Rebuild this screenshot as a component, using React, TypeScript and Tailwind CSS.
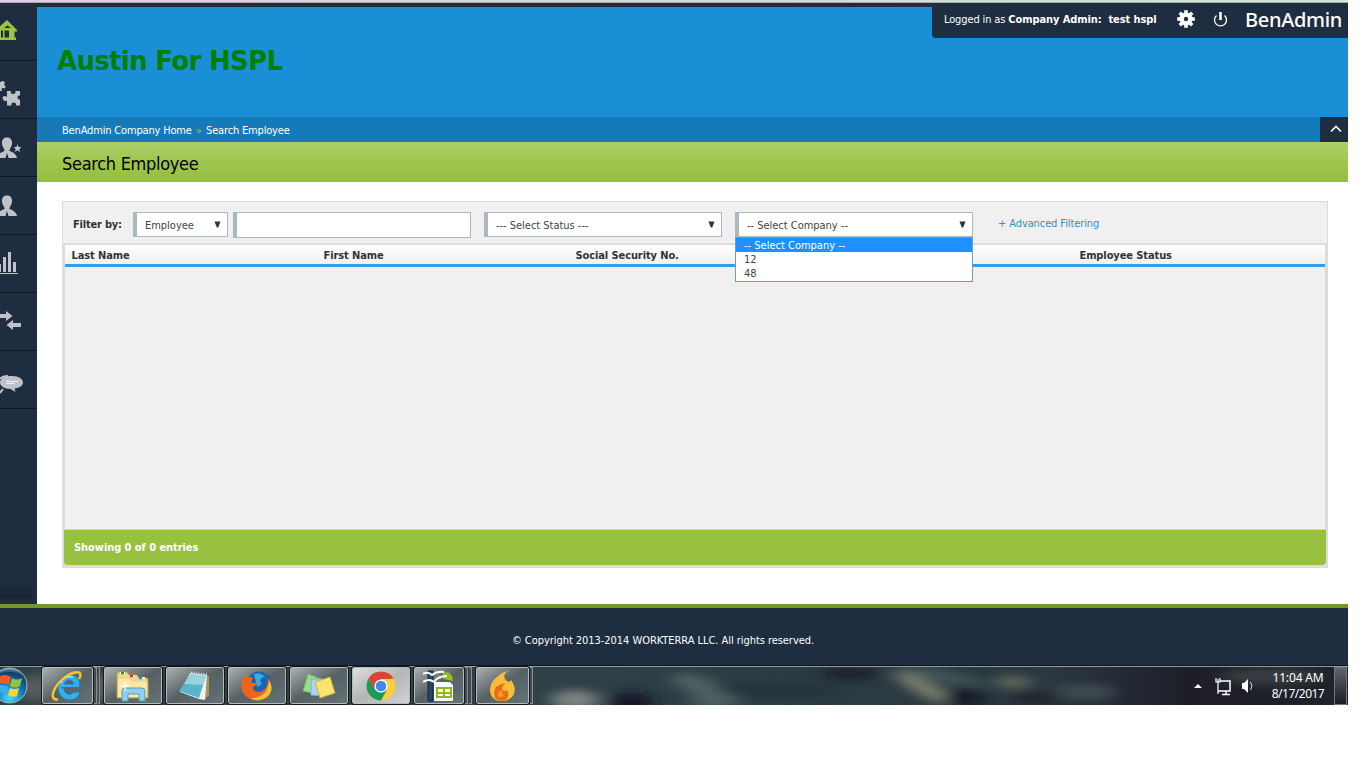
import { ReactNode } from "react";

const sans = "font-['DejaVu_Sans_Condensed','DejaVu_Sans',sans-serif] [font-stretch:condensed]";

const columns = ["Last Name", "First Name", "Social Security No.", "", "Employee Status"];

const HomeIcon = () => (
    <svg width="37" height="57" className="fill-[#9cc545]">
        <path d="M-4 27 L7 17 L17 27 L17 28.5 L14.5 28.5 L14.5 34.500 L16 34.500 L16 37 L-2 37 L-2 28.500 Z" />
        <path d="M4 25 L7.500 22.500 L11 25 Z M1 27.500 H3 V34.500 H1 Z M4.500 27.500 H9 V34.500 H4.500 Z" className="fill-[#1e2d40]" />
    </svg>
);

const PuzzleIcon = () => (
    <svg width="37" height="57" className="fill-[#bfc3c9]">
        <path d="M-2 21 H1 Q2 19 5 21.500 L4 23.500 Q6 25 5 27.500 L3 27 Q1 27 2 30 H-2 Z" />
        <path d="M7 30 H11 Q10 33 13 33 Q16 33 15.500 30 H20 V34.500 Q17.500 34 17.500 36.500 Q17.500 39 20 38.500 V44.500 H16 Q16.500 41.500 13.500 41.500 Q11 41.500 11.500 44.500 H7 V39.500 Q5 41 3 38.500 Q1.500 35 5 35 L7 36 Z" />
    </svg>
);

const UserPath = () => (
    <path d="M7 18.500 C10.500 18.500 12.500 21 12 25 C11.500 28 10 29.500 9.500 31 L9.500 32 Q15.500 33.500 17 39 H8.500 L7 34 L5.500 39 H-3 Q-1.500 33.500 4.500 32 L4.500 31 C4 29.500 2.500 28 2 25 C1.500 21 3.500 18.500 7 18.500 Z" />
);

const UserStarIcon = () => (
    <svg width="37" height="57" className="fill-[#bfc3c9]">
        <UserPath />
        <path d="M17.500 25 L18.500 28 H21.500 L19.300 30 L20.300 33 L17.500 31.300 L14.700 33 L15.700 30 L13.500 28 H16.500 Z" />
    </svg>
);

const UserIcon = () => (
    <svg width="37" height="57" className="fill-[#bfc3c9]">
        <UserPath />
    </svg>
);

const ChartIcon = () => (
    <svg width="37" height="57" className="fill-[#bfc3c9]">
        <path d="M-2 29 H1 V37 H-2 Z M3 22 H6 V37 H3 Z M8 17 H11 V37 H8 Z M13 27 H16 V37 H13 Z M0 38 H18 V39 H0 Z" />
    </svg>
);

const ArrowsIcon = () => (
    <svg width="37" height="57" className="fill-[#bfc3c9]">
        <path d="M0 21 H6 V18 L12.500 23 L6 28 V25 H0 Z M21 30 H13 V27 L6.500 32 L13 37 V34 H21 Z" />
    </svg>
);

const ChatIcon = () => (
    <svg width="37" height="57">
        <path d="M0 28 Q2 25.500 8 25 M0 42 L3 38" stroke="#bfc3c9" strokeWidth="2" fill="none" />
        <path d="M12 25 C19 25 23 28 23 31.500 C23 35 19 37 14.500 37.500 L15.500 41 L10.500 38 C4 38 0 35 0 31.500 C0 27.500 5 25 12 25 Z" fill="#bfc3c9" />
        <path d="M6 30.500 H18 M6 32.500 H15" stroke="#eef0f1" />
    </svg>
);

const menu = [HomeIcon, PuzzleIcon, UserStarIcon, UserIcon, ChartIcon, ArrowsIcon, ChatIcon];

const Sidebar = () => (
    <aside className="w-[37px] shrink-0 overflow-hidden bg-[#1e2d40] flex flex-col">
        {menu.map((Icon, i) => (
            <div key={i} className="h-[58px] shrink-0 border-b border-[#0f1825] overflow-hidden">
                <Icon />
            </div>
        ))}
        <div className="mt-auto mb-[5px] h-[20px] w-8 bg-linear-to-b from-[#1e2d40] to-[#1a2431]"></div>
    </aside>
);

const Select = ({ label, className }: { label: string; className: string }) => (
    <div className={`h-[25px] flex items-center justify-between border border-l-4 border-[#a9b8c1] bg-white pl-[8px] pr-[6px] ${className}`}>
        <span className="pt-[2px] tracking-[-0.02px]">{label}</span>
        <svg width="7" height="7" className="mb-px"><path d="M0.500 0.500 H6.500 L4.200 6.500 H2.800 Z" fill="#333" /></svg>
    </div>
);

const TopBar = () => (
    <div className="h-[31px] w-[416px] rounded-bl bg-[#1e2d40] text-white flex items-start">
        <p className="ml-[12px] mt-[5px] w-[215px] text-[11px] leading-4 whitespace-pre tracking-[-0.13px]">
            Logged in as <b className="tracking-[-0.08px]">Company Admin:  test hspl</b>
        </p>
        <svg width="18" height="18" viewBox="-9 -9 18 18" className="ml-[18px] mt-[3px]">
            <g fill="#fff">
                <circle r="6.500" />
                <path d="M-1.800 -8.800 H1.800 V8.800 H-1.800 Z" />
                <path d="M-1.800 -8.800 H1.800 V8.800 H-1.800 Z" transform="rotate(45)" />
                <path d="M-1.800 -8.800 H1.800 V8.800 H-1.800 Z" transform="rotate(90)" />
                <path d="M-1.800 -8.800 H1.800 V8.800 H-1.800 Z" transform="rotate(135)" />
            </g>
            <circle r="2.200" fill="#1e2d40" />
        </svg>
        <svg width="14" height="16" className="ml-[18px] mt-[5px]" fill="none" stroke="#fff">
            <path d="M3.500 3.500 A6 6 0 1 0 11.500 3.500" strokeWidth="1.300" />
            <path d="M7.500 0 V8" strokeWidth="2.600" />
        </svg>
        <span className="ml-[18px] mt-[-1px] font-['Noto_Sans',sans-serif] text-[20px] font-medium leading-[28px] tracking-[-0.3px]">BenAdmin</span>
    </div>
);

const FilterBar = () => (
    <div className="h-[41px] flex items-start pl-[10px] pt-[10px] text-[11px] leading-4 text-[#444]">
        <b className="w-[60px] pt-[5px] tracking-[-0.2px] text-[#333]">Filter by:</b>
        <Select label="Employee" className="w-[95px]" />
        <div className="ml-[5px] h-[26px] w-[238px] border border-l-4 border-[#a9b8c1] bg-white"></div>
        <Select label="--- Select Status ---" className="ml-[13px] w-[238px]" />
        <div className="relative ml-[13px]">
            <Select label="-- Select Company --" className="w-[238px]" />
            <ul className="absolute left-0 top-[25px] w-[238px] h-[45px] border border-[#7398cc] bg-white leading-[16px] z-10">
                <li className="h-[14px] bg-[#1e90ff] pl-2 text-white">-- Select Company --</li>
                <li className="h-[14px] pl-2">12</li>
                <li className="h-[14px] pl-2">48</li>
            </ul>
        </div>
        <a className="ml-[25px] pt-[4px] tracking-[-0.1px] text-[#3b8dbd]">+ Advanced Filtering</a>
    </div>
);

const Panel = () => (
    <section className="mt-[19px] ml-[25px] w-[1266px] h-[367px] border border-[#dcdcdc] bg-[#f0f0f0]">
        <FilterBar />
        <div className="h-[324px] border-2 border-[#dcdcdc] flex flex-col">
            <div className="h-[22px] shrink-0 grid grid-cols-5 border-b-3 border-[#319fe7] bg-linear-to-b from-white to-[#f0f0f0] text-[11px] font-bold leading-[22px] tracking-[-0.1px] text-[#333]">
                {columns.map((c, i) => <span key={i} className="pl-[6.5px]">{c}</span>)}
            </div>
            <div className="grow"></div>
            <div className="-mx-px h-[36px] shrink-0 rounded-b border-t border-[#cfdcb5] bg-[#98c13f] pl-[10px] text-[11px] font-bold leading-[35px] tracking-[-0.06px] text-white">
                Showing 0 of 0 entries
            </div>
        </div>
    </section>
);

const Task = ({ children, className = "", active }: { children: ReactNode; className?: string; active?: boolean }) => (
    <div className={`relative h-[37px] mt-px shrink-0 rounded-[2px] border border-[#b4babc] outline outline-[#15191c] flex items-center justify-center bg-linear-to-br ${active ? "from-[#dedede] via-[#b4b7b8] to-[#d0d2d3]" : "from-[#adafb0] via-[#566164] to-[#647376]"} ${className}`}>
        {children}
    </div>
);

const Stack = ({ className }: { className: string }) => (
    <div className={`relative h-[37px] mt-px ml-px border-r border-y border-[#899194] bg-[#444c4e] shrink-0 ${className}`}></div>
);

const Taskbar = () => (
    <div className="relative h-[40px] w-full overflow-hidden border-t border-[#10141c] bg-[#252f38] flex">
        <svg className="absolute inset-0" width="1348" height="39" preserveAspectRatio="none">
            <defs>
                <filter id="soft" x="-50%" y="-50%" width="200%" height="200%"><feGaussianBlur stdDeviation="9 4" /></filter>
                <linearGradient id="night"><stop offset=".4" stopColor="#2d4147" /><stop offset=".78" stopColor="#2a3840" /><stop offset=".88" stopColor="#1d1e28" /><stop offset="1" stopColor="#20232b" /></linearGradient>
            </defs>
            <rect width="1348" height="39" fill="url(#night)" />
            <g filter="url(#soft)">
                <ellipse cx="70" cy="22" rx="70" ry="14" fill="#555b5d" />
                <ellipse cx="575" cy="34" rx="24" ry="10" fill="#7d8480" />
                <ellipse cx="632" cy="36" rx="22" ry="10" fill="#151827" />
                <ellipse cx="695" cy="18" rx="24" ry="9" fill="#50615f" transform="rotate(15 695 18)" />
                <ellipse cx="715" cy="34" rx="25" ry="9" fill="#4b5e61" />
                <ellipse cx="780" cy="24" rx="60" ry="9" fill="#24363e" />
                <ellipse cx="850" cy="8" rx="30" ry="7" fill="#1d222d" />
                <ellipse cx="925" cy="22" rx="34" ry="8" fill="#79806f" transform="rotate(28 925 22)" />
                <ellipse cx="965" cy="32" rx="22" ry="10" fill="#171c29" />
                <ellipse cx="945" cy="10" rx="40" ry="4" fill="#4c5d5b" transform="rotate(12 945 10)" />
                <ellipse cx="1013" cy="16" rx="18" ry="6" fill="#65695e" />
                <ellipse cx="1040" cy="32" rx="30" ry="7" fill="#20252e" />
                <ellipse cx="1085" cy="26" rx="30" ry="8" fill="#3c4c50" />
                <ellipse cx="1270" cy="10" rx="50" ry="9" fill="#373d40" />
            </g>
            <path d="M0 .5 H1348" stroke="#969a9c" />
        </svg>
        <div className="relative w-[42px] shrink-0">
            <svg width="30" height="39">
                <defs><radialGradient id="orb" cx=".5" cy=".85" r=".9"><stop stopColor="#3de2ff" /><stop offset=".45" stopColor="#1477b7" /><stop offset=".8" stopColor="#123e69" /><stop offset="1" stopColor="#b4d2e1" /></radialGradient></defs>
                <circle cx="9.500" cy="19.500" r="17.500" fill="url(#orb)" stroke="#9bb9ca" />
                <path d="M-2 11 Q5 7 11 11 L9 19 Q3 16 -3 19 Z" fill="#ee5a28" />
                <path d="M12 12 Q17 15 22 12 L20 20 Q15 23 10 20 Z" fill="#8dc63f" />
                <path d="M-4 21 Q2 17 8.500 21 L7 28 Q1 25 -5 28 Z" fill="#3dade8" />
                <path d="M10 22 Q14 24 19 22 L17 30 Q13 32 8 29 Z" fill="#ffd43a" />
            </svg>
        </div>
        <Task className="w-[51px]">
            <svg width="34" height="34" viewBox="0 0 34 34">
                <path d="M10.500 18.500 H28.500 C30 8 24 6 19 6 C12 6 7 11 7 18.500 C7 26 12 31 19 31 C24 31 28 28 29 23 H22.500 C21 26.500 13.500 26.500 13 19.500 Z M13.500 15 C14.500 9.500 21.500 9.500 22.500 15 Z" fill="#36aeeb" fillRule="evenodd" stroke="#1673bd" strokeWidth=".8" />
                <path d="M10 14 C12 8 18 7 22 8" fill="none" stroke="#a2e4ff" strokeWidth="1.500" />
                <path d="M7 30.500 C-6 32 7 7 24 3.500 C31 2 30 7 28 10" fill="none" stroke="#f6c51e" strokeWidth="2.500" />
            </svg>
        </Task>
        <Stack className="w-[3px]" />
        <Stack className="w-[2px]" />
        <Task className="ml-[4px] w-[58px]">
            <svg width="34" height="32" viewBox="0 0 34 32">
                <path d="M1 28 V4 Q1 2 3 2 H11 L13 5 H21 L23 8 H31 Q32 8 32 10 V28 Z" fill="#efd787" stroke="#b99b42" />
                <path d="M4 3 H9 M14 6 H19 M24 8 H29" stroke="#fff" strokeWidth="2" />
                <path d="M5 3 H8" stroke="#1aa13c" strokeWidth="2.500" />
                <path d="M14 6 H17" stroke="#d9342b" strokeWidth="2.500" />
                <path d="M23 8 H26" stroke="#2986d6" strokeWidth="2.500" />
                <path d="M2 9 H13 L16 12 H31 V27 H2 Z" fill="#f9e8a8" />
                <path d="M6 31 V21 Q6 18 9 18 H26 Q29 18 29 21 V31 H23 V24 H12 V31 Z" fill="#91cfea" stroke="#4e9dc7" />
                <path d="M9 11 V21 M4 16 H14" stroke="#fff" strokeWidth="1.500" opacity=".8" />
            </svg>
        </Task>
        <Task className="ml-[4px] w-[58px]">
            <svg width="32" height="30" viewBox="0 0 32 30">
                <path d="M12 3 L30 5 V24 L25 29 Z" fill="#ad9355" />
                <path d="M11 2 L28 4 L26 29 L20 28 L1 21 Z" fill="#eef3f4" />
                <path d="M11 3 L27 5 L20 27 L0 20 Z" fill="#58b5ca" />
                <path d="M11 3 L27 5 L24 14 L5 13 Z" fill="#98d3dc" />
                <path d="M12 2 L28 4" stroke="#d7dddf" strokeWidth="3" strokeDasharray="1 1.500" />
            </svg>
        </Task>
        <Task className="ml-[4px] w-[58px]">
            <svg width="32" height="32" viewBox="0 0 32 32">
                <circle cx="18" cy="13.500" r="12" fill="#1765b3" />
                <path d="M13 4 Q20 2 24 7 Q20 7 19 11 L21 14 L16 17" fill="#3faade" />
                <path d="M3 5 L6 8 Q9 6 12 8 Q10 10 11 13 L16 13 Q15 16 12 17 Q12 22 18 22 Q27 21 27 8 Q34 19 27 26 Q20 33 10 29 Q-2 24 1 11 Z" fill="#ee6418" />
                <path d="M28 10 Q34 20 26 27 Q18 33 9 28 Q27 28 28 10" fill="#f9bd32" />
            </svg>
        </Task>
        <Task className="ml-[4px] w-[58px]">
            <svg width="34" height="30" viewBox="0 0 34 30">
                <path d="M6 3 L19 8 L14 23 L1 20 Z" fill="#9bdc86" stroke="#6bb85d" />
                <path d="M9 8 L21 8 V25 L9 24 Z" fill="#a9d5f4" stroke="#78afd8" />
                <path d="M13 11 L28 6 L33 22 L18 27 Z" fill="#fae36e" stroke="#d3ae36" />
            </svg>
        </Task>
        <Task active className="ml-[4px] w-[58px]">
            <svg width="30" height="30" viewBox="-15 -15 30 30">
                <circle r="14.500" fill="#fbce3a" />
                <path d="M-12.600 -7.200 A14.500 14.500 0 0 1 12.600 -7.200 L0 -7 L-6 3.500 Z" fill="#dc4437" />
                <path d="M-12.600 -7.200 A14.500 14.500 0 0 0 0 14.500 L6 3.500 L-6 3.500 Z" fill="#179c5a" />
                <circle r="6.600" fill="#fff" /><circle r="5.300" fill="#4587f2" />
            </svg>
        </Task>
        <Task className="ml-[4px] w-[50px]">
            <svg width="32" height="32" viewBox="0 0 32 32">
                <path d="M5 1 H10 V31 H5 Z" fill="#254766" stroke="#122437" />
                <path d="M20 2 Q30 1 30 11 L20 9 Z" fill="#94bd22" />
                <path d="M11 12 H27 L30 15 V31 H11 Z" fill="#f6f8f3" />
                <path d="M13 17 H29 V28 H13 Z" fill="#8fb91b" />
                <path d="M15 19 H20 V22 H15 Z M22 19 H27 V22 H22 Z M15 24 H20 V26 H15 Z M22 24 H27 V26 H22 Z" fill="#fff" />
                <path d="M0 4 Q5 1 9 5 Q14 1 21 2 M0 12 Q6 8 11 12 Q15 6 24 6" fill="none" stroke="#fff" strokeWidth="2" />
            </svg>
        </Task>
        <Stack className="w-[3px]" />
        <Stack className="w-[3px]" />
        <Task className="ml-[4px] w-[53px]">
            <svg width="28" height="32" viewBox="0 0 28 32">
                <path d="M21 0 Q13 4 16 9 Q20 14 22 10 Q29 20 23 27 Q18 32 10 31 Q1 29 1 20 Q1 12 9 6 Q14 2 21 0 Z" fill="#f9bd3e" />
                <path d="M16 13 Q5 15 5 23 Q5 31 13 31 Q22 29 18 20 Q14 23 13 18 Q14 15 16 13 Z" fill="#ed6b16" />
                <path d="M14 20 Q8 21 9 26 Q13 29 15 25 Q12 25 14 20" fill="#f99a35" />
            </svg>
        </Task>
        <Stack className="w-[3px]" />
        <div className="relative ml-auto flex text-white">
            <svg width="66" height="39">
                <path d="M1 22 L5 18 L9 22 Z" fill="#fff" />
                <path d="M27 15 H37 V25 H25 M29 28.500 H37 M33 25 V28" stroke="#fff" strokeWidth="1.500" fill="none" />
                <path d="M23 12 V16 H27 V12 M25 13 V28" stroke="#fff" strokeWidth="1.200" fill="none" />
                <path d="M49 17 H51 L55 13 V27 L51 23 H49 Z" fill="#fff" />
                <path d="M57.500 16 Q60.500 20 57.500 24" stroke="#ddd" fill="none" />
            </svg>
            <div className="w-[75px] pt-[4px] pl-[3px] text-center font-['Noto_Sans',sans-serif] text-[12px] leading-[16px]">
                <p className="tracking-[-0.15px]">11:04 AM</p>
                <p className="tracking-[-0.5px]">8/17/2017</p>
            </div>
            <div className="h-[38px] w-[13px] mr-px mt-px border border-[#73777b] bg-linear-to-b from-[#62666a] to-[#1b1d25]"></div>
        </div>
    </div>
);

const App = () => {
    return (
        <div className={`w-full h-screen overflow-hidden bg-white ${sans}`}>
            <div className="w-[1348px]">
                <div className="h-[3px] border-b border-[#a9a9b1] bg-linear-to-r from-[#e6c9f0] via-[#cfe0cf] to-[#d3e4d2]"></div>
                <div className="h-[601px] flex">
                    <Sidebar />
                    <main className="grow">
                        <div className="h-[114px] border-t-4 border-[#1e2d40] bg-[#1b8fd6] flex justify-between">
                            <h1 className="ml-[20px] mt-[35px] font-['DejaVu_Sans',sans-serif] [font-stretch:normal] text-[26px] font-bold leading-[38px] tracking-[-0.68px] text-[#008000]">Austin For HSPL</h1>
                            <TopBar />
                        </div>
                        <div className="h-[25px] bg-[#177ab8] flex justify-between text-[11px] leading-[27px] text-white">
                            <p className="pl-[25px] tracking-[-0.17px]">BenAdmin Company Home <span className="pl-[1px] pr-[1.5px] text-[#98c13f]">»</span> Search Employee</p>
                            <div className="w-[28px] bg-[#1e2d40] flex items-center justify-center">
                                <svg width="12" height="8" className="ml-[4px] mb-[1px]"><path d="M1 6.500 L6 1.500 L11 6.500" stroke="#fff" strokeWidth="1.700" fill="none" /></svg>
                            </div>
                        </div>
                        <h2 className="h-[40px] bg-linear-to-b from-[#afd06a] via-[#9dc64c] to-[#95bf3e] pl-[25px] text-[18px] leading-[43px] tracking-[-0.3px] text-black">Search Employee</h2>
                        <Panel />
                    </main>
                </div>
                <footer className="h-[61px] border-t-4 border-[#76962c] bg-[#1e2d40] pt-[25px] pr-[22px] text-center text-[11px] leading-4 tracking-[-0.05px] text-white">
                    © Copyright 2013-2014 WORKTERRA LLC. All rights reserved.
                </footer>
                <Taskbar />
            </div>
        </div>
    );
};

export default App;
